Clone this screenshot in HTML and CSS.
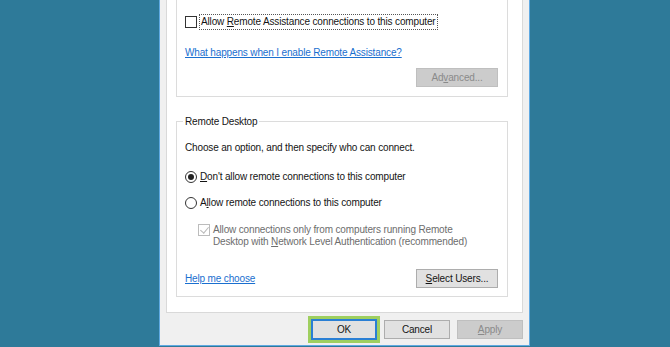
FILE: index.html
```html
<!DOCTYPE html>
<html lang="en">
<head>
    <meta charset="UTF-8">
    <meta name="viewport" content="width=device-width, initial-scale=1.0">
    <title>System Properties - Remote</title>
    <link rel="stylesheet" href="styles.css">
</head>
<body>

    <div class="dialog">
        <div class="tab-page">

            <div class="group group-assist">
                <label class="check-row">
                    <span class="checkbox"></span>
                    <span class="focus-text">Allow <u>R</u>emote Assistance connections to this computer</span>
                </label>
                <a href="#" class="link link-assist">What happens when I enable Remote Assistance?</a>
                <div class="group-actions">
                    <button class="btn" disabled>Ad<u>v</u>anced...</button>
                </div>
            </div>

            <fieldset class="group group-desktop">
                <legend>Remote Desktop</legend>
                <p class="hint">Choose an option, and then specify who can connect.</p>

                <label class="radio-row row-first">
                    <span class="radio checked"></span>
                    <span><u>D</u>on't allow remote connections to this computer</span>
                </label>
                <label class="radio-row row-second">
                    <span class="radio"></span>
                    <span>A<u>l</u>low remote connections to this computer</span>
                </label>

                <label class="check-row sub-option disabled">
                    <span class="checkbox checked"></span>
                    <span class="sub-text">Allow connections only from computers running Remote<br>Desktop with <u>N</u>etwork Level Authentication (recommended)</span>
                </label>

                <div class="help-row">
                    <a href="#" class="link">Help me choose</a>
                    <button class="btn"><u>S</u>elect Users...</button>
                </div>
            </fieldset>

        </div>

        <div class="button-bar">
            <button class="btn btn-default">OK</button>
            <button class="btn">Cancel</button>
            <button class="btn" disabled><u>A</u>pply</button>
        </div>
    </div>

</body>
</html>
```

FILE: styles.css
```css
*{box-sizing: border-box;}
body{
    margin:0;
    height:347px;
    overflow:hidden;
    background-color:#2e7a99;
    font-family:"Liberation Sans", Arial, sans-serif;
    font-size:10px;
    letter-spacing:-0.15px;
    color:#141414;
}
u{text-decoration: underline;}

/* window */
.dialog{
    margin-left:159px;
    width:371px;
    height:346px;
    background-color:#f0f0f0;
    border:1px solid #5fa9e2;
    border-top:none;
    padding:0 6px 0 6px;
    display:flex;
    flex-direction:column;
}

.tab-page{
    width:357px;
    height:313px;
    background-color:#fff;
    border:1px solid #d9d9d9;
    border-top:none;
    padding:0 14px 0 9px;
}

/* group boxes */
.group{
    border:1px solid #dcdcdc;
    margin:0;
    min-width:0;
}
.group-assist{
    border-top:none;
    padding:15px 9px 9px 8px;
}
.group-desktop{
    margin-top:18px;
    padding:13px 9px 8px 8px;
}
.group-desktop legend{
    padding:0 2px;
    margin-left:-2px;
    line-height:13px;
}

.check-row,
.radio-row{
    display:flex;
    align-items:center;
    line-height:14px;
    height:14px;
    white-space:nowrap;
}
.checkbox{
    width:12px;
    height:12px;
    border:1px solid #333;
    background:#fff;
    flex-shrink:0;
    margin-right:3px;
    position:relative;
}
.checkbox.checked::after{
    content:"";
    position:absolute;
    left:3px;
    top:0px;
    width:4px;
    height:7px;
    border:solid #b8b8b8;
    border-width:0 1px 1px 0;
    transform:rotate(40deg);
}
.focus-text{
    outline:1px dotted #555;
    outline-offset:0;
    padding:0 1px;
}

.radio{
    width:12px;
    height:12px;
    border:1px solid #333;
    border-radius:50%;
    background:#fff;
    flex-shrink:0;
    margin-right:3px;
    display:flex;
    align-items:center;
    justify-content:center;
}
.radio.checked::after{
    content:"";
    width:6px;
    height:6px;
    border-radius:50%;
    background:#222;
}

.link{
    color:#1a6fcf;
    text-decoration:underline;
    line-height:14px;
}
.link-assist{
    display:block;
    margin-top:17px;
}

.group-actions{
    display:flex;
    justify-content:flex-end;
    margin-top:8px;
}

.hint{
    margin:0;
    line-height:14px;
}
.row-first{margin-top:15px;}
.row-second{margin-top:12px;}

.sub-option{
    margin-top:14px;
    margin-left:13px;
    height:auto;
    align-items:flex-start;
    line-height:12px;
}
.sub-option .checkbox{
    border-color:#bcbcbc;
}
.disabled{color:#6d6d6d;}

.help-row{
    margin-top:21px;
    display:flex;
    align-items:center;
    justify-content:space-between;
}

/* buttons */
.btn{
    width:82px;
    height:19px;
    padding:0;
    font-family:inherit;
    font-size:10px;
    letter-spacing:inherit;
    color:#141414;
    background-color:#e1e1e1;
    border:1px solid #adadad;
}
.btn:disabled{
    background-color:#cccccc;
    border-color:#bfbfbf;
    color:#8a8a8a;
}

.button-bar{
    flex:1;
    display:flex;
    align-items:center;
    justify-content:flex-end;
    gap:7px;
}
.button-bar .btn{width:66px;}
.btn-default{
    height:21px;
    border:2px solid #2a7fd4;
    outline:3px solid #9fcf5f;
}
```
